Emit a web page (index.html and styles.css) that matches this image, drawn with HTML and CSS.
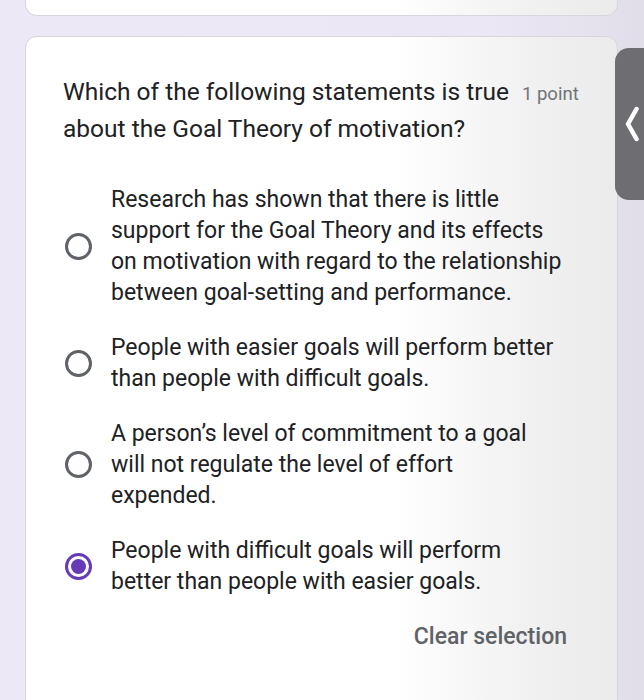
FILE: index.html
```html
<!DOCTYPE html>
<html>
<head>
<meta charset="utf-8">
<link rel="stylesheet" href="styles.css">
</head>
<body>
<div class="page">
  <div class="card card-top"></div>
  <div class="card card-main">
    <div class="question-row">
      <div class="question">Which of the following statements is true about the Goal Theory of motivation?</div>
      <div class="points">1 point</div>
    </div>
    <div class="options">
      <div class="option">
        <span class="radio"></span>
        <span class="label">Research has shown that there is little support for the Goal Theory and its effects on motivation with regard to the relationship between goal-setting and performance.</span>
      </div>
      <div class="option">
        <span class="radio"></span>
        <span class="label">People with easier goals will perform better than people with difficult goals.</span>
      </div>
      <div class="option">
        <span class="radio"></span>
        <span class="label">A person’s level of commitment to a goal will not regulate the level of effort<br>expended.</span>
      </div>
      <div class="option">
        <span class="radio radio-checked"><span class="dot"></span></span>
        <span class="label">People with difficult goals will perform better than people with easier goals.</span>
      </div>
    </div>
    <div class="clear-row"><span class="clear">Clear selection</span></div>
  </div>
</div>
<div class="side-tab">
  <svg width="16" height="36" viewBox="0 0 16 36"><path d="M12.5 3 L4 18 L12.5 33" fill="none" stroke="#fff" stroke-width="4.5" stroke-linecap="round" stroke-linejoin="round"/></svg>
</div>
</body>
</html>
```
FILE: styles.css
```css
html, body {
  margin: 0;
  padding: 0;
}
body {
  background: linear-gradient(to right, #ece8f6 0%, #ebe7f5 75%, #e2dee9 100%);
  font-family: Roboto, "Noto Sans", sans-serif;
  color: #202124;
  height: 700px;
  overflow: hidden;
  position: relative;
}
.page {
  padding: 0 26px 0 25px;
  display: flex;
  flex-direction: column;
}
.card {
  background: linear-gradient(to right, #ffffff 0%, #ffffff 62%, #f1f1f1 85%, #ebebeb 100%);
  border: 1px solid #d8d6dd;
  border-radius: 12px;
}
.card-top {
  height: 15px;
  border-top: none;
  border-radius: 0 0 12px 12px;
}
.card-main {
  margin-top: 20px;
  padding: 36px 30px 60px 37px;
}
.question-row {
  display: flex;
  align-items: baseline;
  gap: 8px;
}
.question {
  font-size: 24.5px;
  line-height: 37px;
  color: #202124;
  width: 451px;
  flex: none;
}
.points {
  font-size: 18.5px;
  color: #6f7378;
  white-space: nowrap;
}
.options {
  margin-top: 37px;
  display: flex;
  flex-direction: column;
  gap: 24px;
}
.option {
  display: flex;
  align-items: center;
  gap: 19px;
}
.radio {
  flex: none;
  width: 21px;
  height: 21px;
  margin-left: 2px;
  border: 3px solid #5f6368;
  border-radius: 50%;
  display: flex;
  align-items: center;
  justify-content: center;
}
.radio-checked {
  border-color: #673ab7;
}
.dot {
  width: 15px;
  height: 15px;
  border-radius: 50%;
  background: #673ab7;
}
.label {
  font-size: 23px;
  line-height: 31px;
  color: #202124;
  width: 454px;
}
.clear-row {
  display: flex;
  justify-content: flex-end;
  margin-top: 24px;
  padding-right: 20px;
}
.clear {
  font-size: 23px;
  line-height: 31px;
  font-weight: 500;
  color: #5f6368;
}
.side-tab {
  position: absolute;
  left: 615px;
  top: 48px;
  width: 29px;
  height: 152px;
  background: #6e6d72;
  border-radius: 14px 0 0 14px;
  display: flex;
  align-items: center;
  justify-content: center;
  padding-left: 4px;
  box-sizing: border-box;
}
```
